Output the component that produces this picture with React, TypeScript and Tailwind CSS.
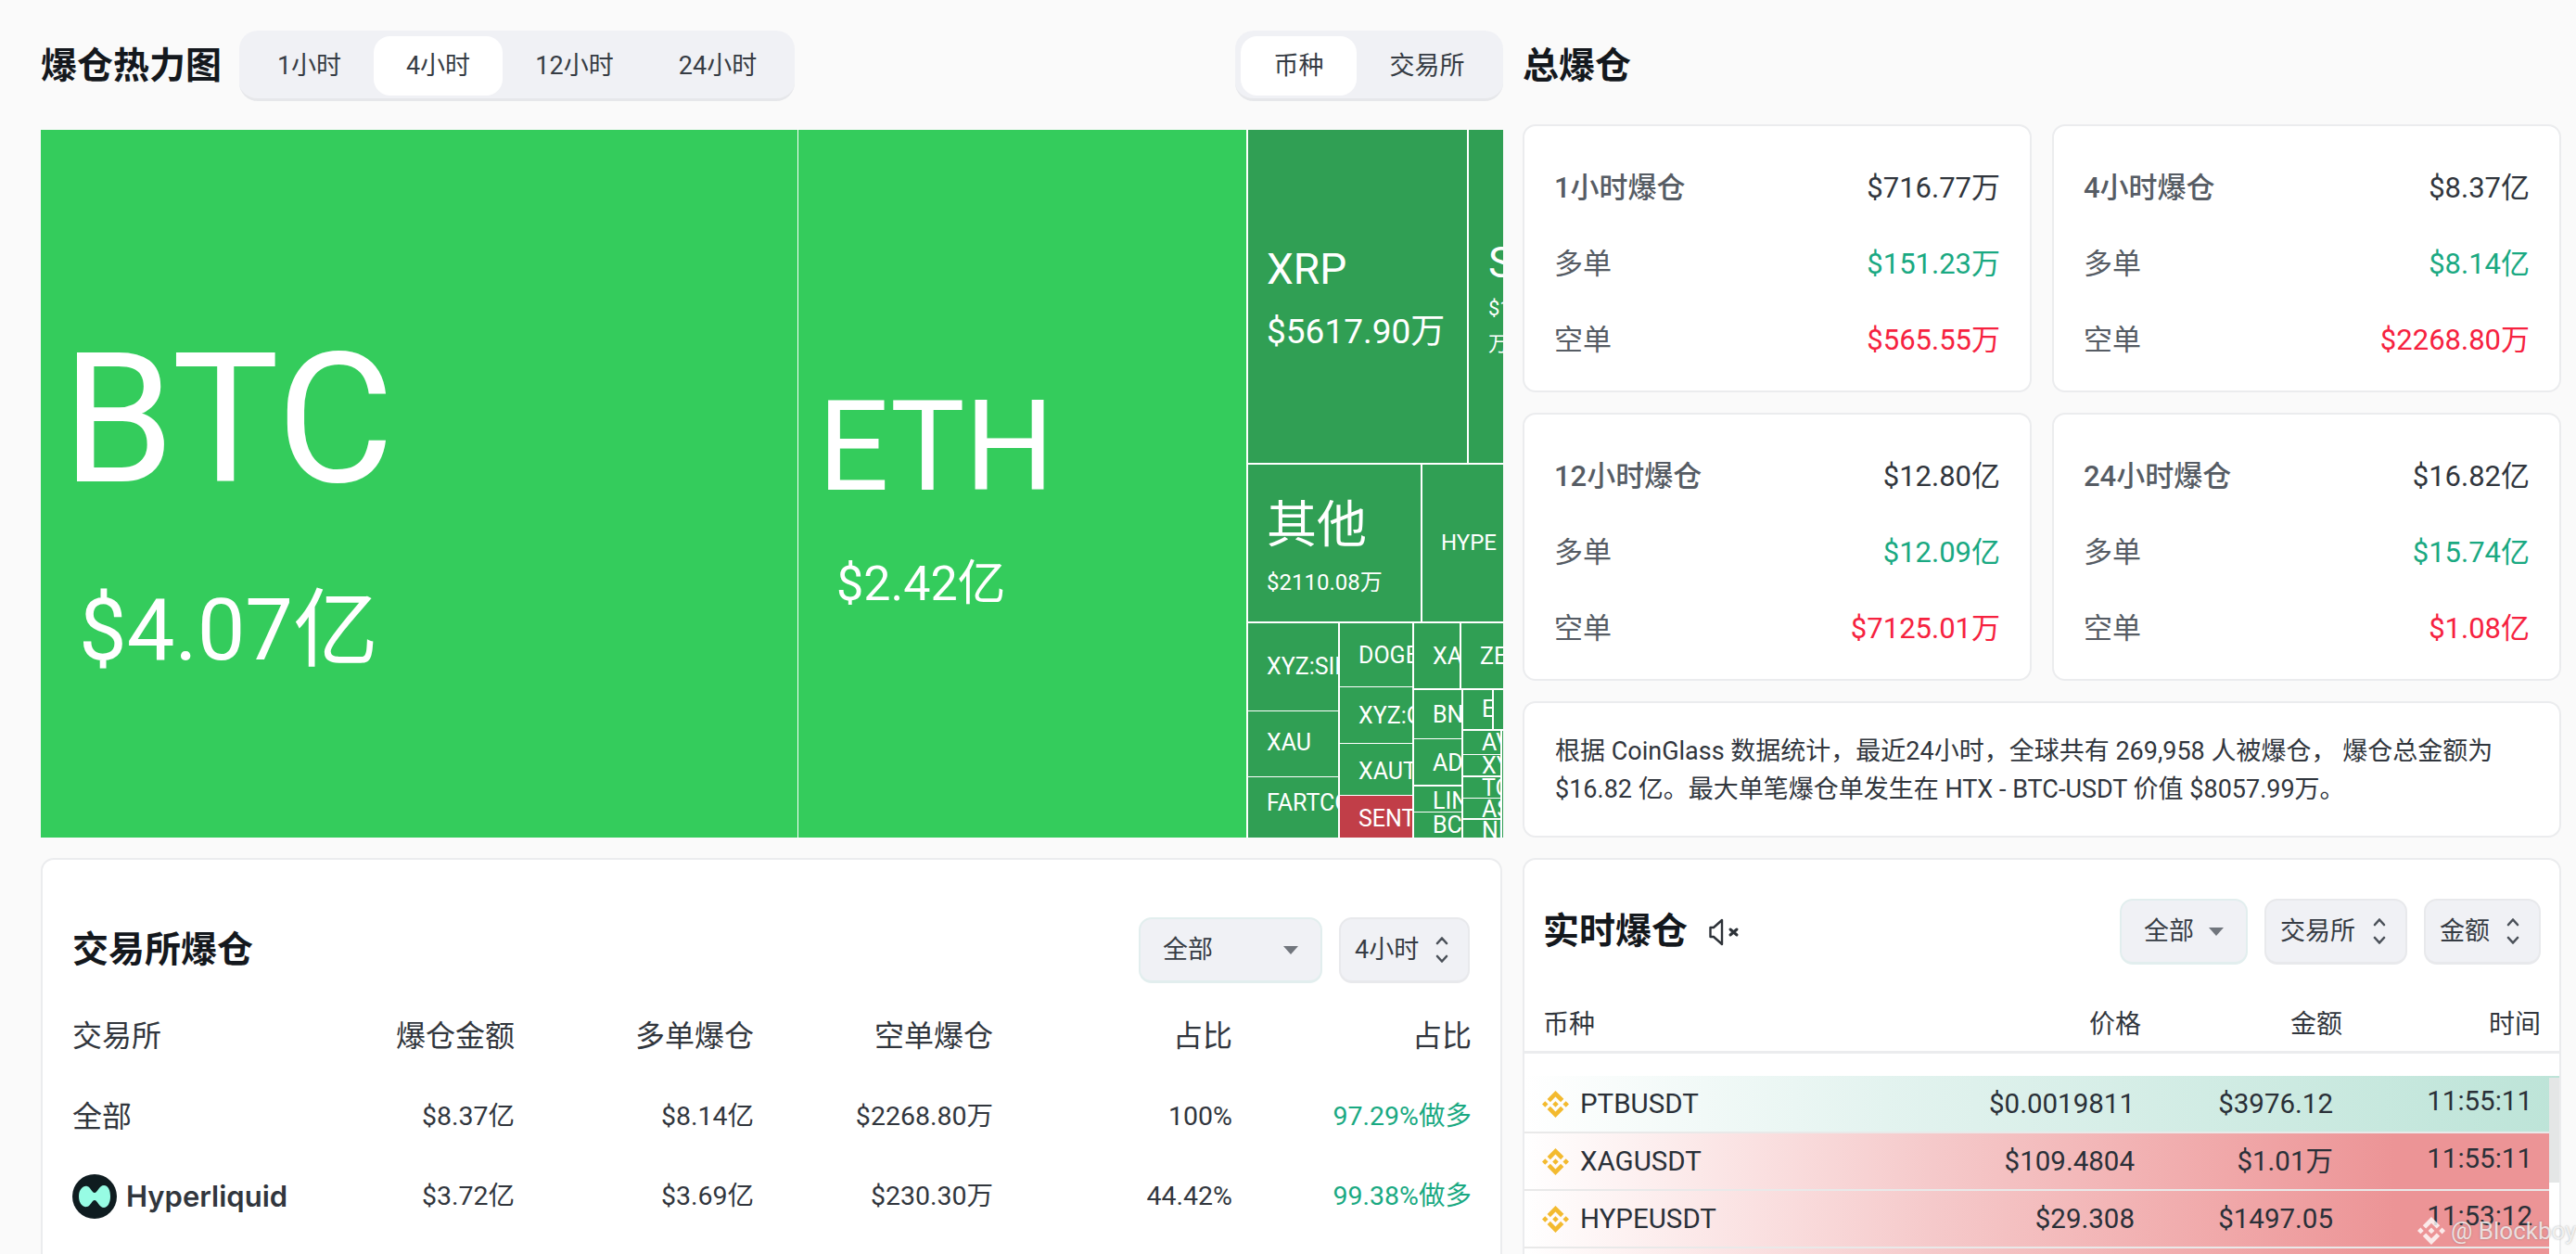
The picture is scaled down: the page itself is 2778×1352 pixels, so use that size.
import React from 'react'
import { SiBinance } from 'react-icons/si'

const FONT = "font-['Roboto','Noto_Sans_CJK_SC',sans-serif]"

type Label = { text: string; x: number; y: number; size: number }
type Tile = { x: number; y: number; w: number; h: number; red?: boolean; bright?: boolean; labels?: Label[] }

// treemap: x / y are offsets inside the map, every tile sits on the free canvas
const TILES: Tile[] = [
    { x: 0, y: 0, w: 816, h: 763, bright: true, labels: [{ text: 'BTC', x: 23, y: 313, size: 194 }, { text: '$4.07亿', x: 41, y: 540, size: 92 }] },
    { x: 817, y: 0, w: 483, h: 763, bright: true, labels: [{ text: 'ETH', x: 21, y: 342, size: 135 }, { text: '$2.42亿', x: 41, y: 490, size: 52 }] },
    { x: 1302, y: 0, w: 236, h: 359, labels: [{ text: 'XRP', x: 20, y: 150, size: 46 }, { text: '$5617.90万', x: 20, y: 217, size: 37 }] },
    { x: 1540, y: 0, w: 37, h: 359, labels: [{ text: 'S', x: 21, y: 143, size: 46 }, { text: '$1', x: 21, y: 193, size: 22 }, { text: '万', x: 21, y: 231, size: 22 }] },
    { x: 1302, y: 361, w: 186, h: 169, labels: [{ text: '其他', x: 20, y: 66, size: 54 }, { text: '$2110.08万', x: 20, y: 127, size: 24 }] },
    { x: 1490, y: 361, w: 87, h: 169, labels: [{ text: 'HYPE', x: 20, y: 84, size: 24 }] },
    { x: 1302, y: 532, w: 97, h: 94, labels: [{ text: 'XYZ:SILVER', x: 20, y: 46, size: 25 }] },
    { x: 1302, y: 627, w: 97, h: 70, labels: [{ text: 'XAU', x: 20, y: 33, size: 25 }] },
    { x: 1302, y: 698, w: 97, h: 65, labels: [{ text: 'FARTCOIN', x: 20, y: 27, size: 25 }] },
    { x: 1401, y: 532, w: 78, h: 68, labels: [{ text: 'DOGE', x: 20, y: 34, size: 25 }] },
    { x: 1401, y: 601, w: 78, h: 60, labels: [{ text: 'XYZ:CL', x: 20, y: 30, size: 25 }] },
    { x: 1401, y: 662, w: 78, h: 55, labels: [{ text: 'XAUT', x: 20, y: 29, size: 25 }] },
    { x: 1401, y: 718, w: 78, h: 45, red: true, labels: [{ text: 'SENT', x: 20, y: 24, size: 25 }] },
    { x: 1481, y: 532, w: 49, h: 70, labels: [{ text: 'XAG', x: 20, y: 35, size: 25 }] },
    { x: 1532, y: 532, w: 45, h: 70, labels: [{ text: 'ZEC', x: 20, y: 35, size: 25 }] },
    { x: 1481, y: 604, w: 51, h: 52, labels: [{ text: 'BNB', x: 20, y: 26, size: 25 }] },
    { x: 1481, y: 657, w: 51, h: 49, labels: [{ text: 'ADA', x: 20, y: 25, size: 25 }] },
    { x: 1481, y: 708, w: 51, h: 27, labels: [{ text: 'LINK', x: 20, y: 15, size: 25 }] },
    { x: 1481, y: 736, w: 51, h: 27, labels: [{ text: 'BCH', x: 20, y: 13, size: 25 }] },
    { x: 1534, y: 604, w: 31, h: 42, labels: [{ text: 'E', x: 20, y: 20, size: 25 }] },
    { x: 1567, y: 604, w: 10, h: 42 },
    { x: 1534, y: 648, w: 40, h: 25, labels: [{ text: 'AVAX', x: 20, y: 12, size: 25 }] },
    { x: 1534, y: 674, w: 40, h: 22, labels: [{ text: 'XYZ', x: 20, y: 11, size: 25 }] },
    { x: 1534, y: 698, w: 40, h: 22, labels: [{ text: 'TON', x: 20, y: 11, size: 25 }] },
    { x: 1534, y: 721, w: 40, h: 21, labels: [{ text: 'ASTER', x: 20, y: 11, size: 25 }] },
    { x: 1534, y: 744, w: 40, h: 19, labels: [{ text: 'NIGHT', x: 20, y: 11, size: 25 }] },
    { x: 1576, y: 648, w: 1, h: 115 },
]

const TOTALS = [
    { title: '1小时爆仓', total: '$716.77万', long: '$151.23万', short: '$565.55万' },
    { title: '4小时爆仓', total: '$8.37亿', long: '$8.14亿', short: '$2268.80万' },
    { title: '12小时爆仓', total: '$12.80亿', long: '$12.09亿', short: '$7125.01万' },
    { title: '24小时爆仓', total: '$16.82亿', long: '$15.74亿', short: '$1.08亿' },
]

const LIVE = [
    { coin: 'PTBUSDT', price: '$0.0019811', amount: '$3976.12', time: '11:55:11', long: true },
    { coin: 'XAGUSDT', price: '$109.4804', amount: '$1.01万', time: '11:55:11' },
    { coin: 'HYPEUSDT', price: '$29.308', amount: '$1497.05', time: '11:53:12' },
]

function Segmented({ items, active, widths }: { items: string[]; active: number; widths: string[] }) {
    return (
        <div className="flex h-[76px] items-start rounded-[20px] border-b-[3px] border-[#e6e7ea] bg-[#f0f1f5] px-[6px] pt-[6px]">
            {items.map((item, i) => (
                <div
                    key={item}
                    className={`flex h-[64px] items-center justify-center rounded-[18px] text-[27px] text-[#363c44] ${widths[i]} ${i === active ? 'bg-white' : ''}`}
                >
                    {item}
                </div>
            ))}
        </div>
    )
}

function UpDown() {
    return (
        <svg width="18" height="32" viewBox="0 0 18 32" fill="none" stroke="#4b5159" strokeWidth="2.6" strokeLinecap="round" strokeLinejoin="round" className="shrink-0">
            <path d="M4 9 L9 3.5 L14 9" />
            <path d="M4 23 L9 28.5 L14 23" />
        </svg>
    )
}

function Caret() {
    return <div className="h-0 w-0 border-x-[8px] border-t-[9px] border-x-transparent border-t-[#71767d]" />
}

function Select({ label, width, tinted, caret }: { label: string; width: string; tinted?: boolean; caret?: boolean }) {
    return (
        <div
            className={`flex h-[71px] items-center justify-between rounded-[14px] border-2 border-b-[3px] bg-[#f0f1f5] text-[27px] text-[#363c44] ${width} ${caret ? 'px-[24px]' : 'pr-[19px] pl-[15px]'} ${tinted ? 'border-[#e2eeee]' : 'border-[#e8e9ec]'}`}
        >
            <span>{label}</span>
            {caret ? <Caret /> : <UpDown />}
        </div>
    )
}

function TotalCard({ title, total, long, short }: { title: string; total: string; long: string; short: string }) {
    return (
        <div className="flex h-[289px] flex-col justify-center rounded-[14px] border-2 border-[#ebecee] bg-white px-[32px] pt-[14px]">
            <div className="flex h-[82px] items-center justify-between text-[31px] text-[#31363d]">
                <span className="font-medium text-[#565c64]">{title}</span>
                <span>{total}</span>
            </div>
            <div className="flex h-[82px] items-center justify-between text-[31px]">
                <span className="text-[#565c64]">多单</span>
                <span className="text-[#1aa982]">{long}</span>
            </div>
            <div className="flex h-[82px] items-center justify-between text-[31px]">
                <span className="text-[#565c64]">空单</span>
                <span className="text-[#f6223f]">{short}</span>
            </div>
        </div>
    )
}

function HeatMap() {
    return (
        <div className={`relative mt-[31px] h-[763px] w-[1577px] overflow-hidden bg-white ${FONT}`}>
            {TILES.map((t, i) => (
                <div
                    key={i}
                    className={`absolute overflow-hidden text-white ${t.red ? 'bg-[#c13e48]' : t.bright ? 'bg-[#34cc5c]' : 'bg-[#309f54]'}`}
                    style={{ left: t.x, top: t.y, width: t.w, height: t.h }}
                >
                    {t.labels?.map((l) => (
                        <div
                            key={l.text}
                            className="absolute -translate-y-1/2 leading-none whitespace-nowrap"
                            style={{ left: l.x, top: l.y, fontSize: l.size }}
                        >
                            {l.text}
                        </div>
                    ))}
                </div>
            ))}
        </div>
    )
}

function HyperliquidLogo() {
    return (
        <svg width="48" height="48" viewBox="0 0 48 48" className="shrink-0">
            <circle cx="24" cy="24" r="24" fill="#0f1c20" />
            <path
                d="M7 24 C7 16 12 12 16 13 C20 14 21 20 24 20 C27 20 29 12 34 12 C39 12 41 18 41 24 C41 31 38 36 34 36 C29 36 27 28 24 28 C21 28 20 34 16 35 C11 36 7 31 7 24 Z"
                fill="#97fce4"
            />
        </svg>
    )
}

function ExchangeCard() {
    const rowClass = 'grid grid-cols-[219px_repeat(5,258px)] items-center text-right text-[28.5px] text-[#31363d]'
    return (
        <div className="mt-[22px] h-[500px] w-[1576px] rounded-[14px] border-2 border-[#ebecee] bg-white pt-[62px] pr-[33px] pl-[32px]">
            <div className="flex h-[71px] items-center justify-between">
                <h2 className="text-[39px] leading-none font-bold text-[#14181d]">交易所爆仓</h2>
                <div className="flex gap-[18px]">
                    <Select label="全部" width="w-[198px]" tinted caret />
                    <Select label="4小时" width="w-[141px]" />
                </div>
            </div>
            <div className={`${rowClass} mt-[27px] h-[60px] text-[32px]`}>
                <span className="text-left">交易所</span>
                <span>爆仓金额</span>
                <span>多单爆仓</span>
                <span>空单爆仓</span>
                <span>占比</span>
                <span>占比</span>
            </div>
            <div className={`${rowClass} mt-[27px] h-[60px]`}>
                <span className="text-left text-[32px]">全部</span>
                <span>$8.37亿</span>
                <span>$8.14亿</span>
                <span>$2268.80万</span>
                <span>100%</span>
                <span className="text-[#1aa982]">97.29%做多</span>
            </div>
            <div className={`${rowClass} mt-[26px] h-[60px]`}>
                <span className="flex items-center gap-[10px] text-left">
                    <HyperliquidLogo />
                    <span className="font-['Inter',sans-serif] text-[31px] font-semibold whitespace-nowrap text-[#31363d]">Hyperliquid</span>
                </span>
                <span>$3.72亿</span>
                <span>$3.69亿</span>
                <span>$230.30万</span>
                <span>44.42%</span>
                <span className="text-[#1aa982]">99.38%做多</span>
            </div>
        </div>
    )
}

function MuteIcon() {
    return (
        <svg width="34" height="30" viewBox="0 0 34 30" fill="none" stroke="#2d3238" strokeLinejoin="round" strokeLinecap="round">
            <path d="M14 2 L14 28 L5 20 L1.5 20 L1.5 10 L5 10 Z" strokeWidth="2.4" transform="translate(1 0)" />
            <path d="M24 12 L31 18 M31 12 L24 18" strokeWidth="3" />
        </svg>
    )
}

function LiveCard() {
    return (
        <div className="relative mt-[22px] h-[500px] overflow-hidden rounded-t-[14px] border-2 border-[#ebecee] bg-white">
            <div className="flex items-center justify-between pt-[42px] pr-[20px] pl-[20px]">
                <div className="flex items-center gap-[22px]">
                    <h2 className="text-[39px] leading-none font-bold text-[#14181d]">实时爆仓</h2>
                    <MuteIcon />
                </div>
                <div className="flex gap-[18px]">
                    <Select label="全部" width="w-[138px]" tinted caret />
                    <Select label="交易所" width="w-[154px]" />
                    <Select label="金额" width="w-[126px]" />
                </div>
            </div>
            <div className="mt-[29px] grid h-[67px] grid-cols-[1fr_200px_217px_214px] items-center border-b-[3px] border-[#ebecee] pt-[8px] pr-[20px] pl-[20px] text-right text-[28px] text-[#31363d]">
                <span className="text-left">币种</span>
                <span>价格</span>
                <span>金额</span>
                <span>时间</span>
            </div>
            <div className="mt-[24px]">
                {LIVE.map((row) => (
                    <div
                        key={row.coin}
                        className={`grid h-[62px] grid-cols-[1fr_200px_214px_215px] items-center border-b-2 border-[#e9e9e9] pl-[19px] text-right text-[29.5px] text-[#2a3038] ${
                            row.long
                                ? 'bg-linear-to-r from-white via-[#e3f3ef] via-35% to-[#bde4d8] pr-[29px]'
                                : 'mr-[11px] bg-linear-to-r from-white via-[#f5c9ca] via-40% to-[#ec9496] to-85% pr-[18px]'
                        }`}
                    >
                        <span className="flex items-center gap-[12px] text-left">
                            <SiBinance size={29} className="shrink-0 text-[#f3ba2f]" />
                            {row.coin}
                        </span>
                        <span>{row.price}</span>
                        <span>{row.amount}</span>
                        <span className="-translate-y-[3px]">{row.time}</span>
                    </div>
                ))}
                <div className="mr-[11px] h-[62px] bg-linear-to-r from-white via-[#f5c9ca] via-40% to-[#ec9496] to-85%" />
            </div>
            <div className="absolute top-[235px] right-0 h-[113px] w-[11px] bg-[#e4e6e6]" />
        </div>
    )
}

function Watermark() {
    return (
        <div className="absolute top-[1312px] left-[2607px] flex items-center gap-[6px] text-[26px] leading-none whitespace-nowrap text-white/75 [text-shadow:0_0_2px_rgba(90,90,90,0.5)]">
            <SiBinance size={30} className="shrink-0 text-white/80" />
            <span>@ Blockboy</span>
        </div>
    )
}

export default function App() {
    return (
        <div className={`relative flex h-[1352px] w-[2778px] gap-[21px] overflow-hidden bg-[#fafafa] pt-[33px] pl-[44px] ${FONT}`}>
            <div className="w-[1577px] shrink-0">
                <div className="flex items-center justify-between">
                    <div className="flex items-center gap-[19px]">
                        <h1 className="text-[39px] leading-none font-bold text-[#14181d]">爆仓热力图</h1>
                        <Segmented
                            items={['1小时', '4小时', '12小时', '24小时']}
                            active={1}
                            widths={['w-[139px]', 'w-[139px]', 'w-[155px]', 'w-[154px]']}
                        />
                    </div>
                    <Segmented items={['币种', '交易所']} active={0} widths={['w-[125px]', 'w-[152px]']} />
                </div>
                <HeatMap />
                <ExchangeCard />
            </div>
            <div className="w-[1120px] shrink-0">
                <h2 className="flex h-[76px] items-center text-[39px] leading-none font-bold text-[#14181d]">总爆仓</h2>
                <div className="mt-[25px] grid grid-cols-2 gap-[22px]">
                    {TOTALS.map((t) => (
                        <TotalCard key={t.title} {...t} />
                    ))}
                </div>
                <div className="mt-[22px] flex h-[147px] flex-col justify-center rounded-[14px] border-2 border-[#ebecee] bg-white px-[33px] pt-[2px] text-[27px] leading-[41px] text-[#31363d]">
                    <p>根据 CoinGlass 数据统计，最近24小时，全球共有 269,958 人被爆仓， 爆仓总金额为</p>
                    <p>$16.82 亿。最大单笔爆仓单发生在 HTX - BTC-USDT 价值 $8057.99万。</p>
                </div>
                <LiveCard />
            </div>
            <Watermark />
        </div>
    )
}
